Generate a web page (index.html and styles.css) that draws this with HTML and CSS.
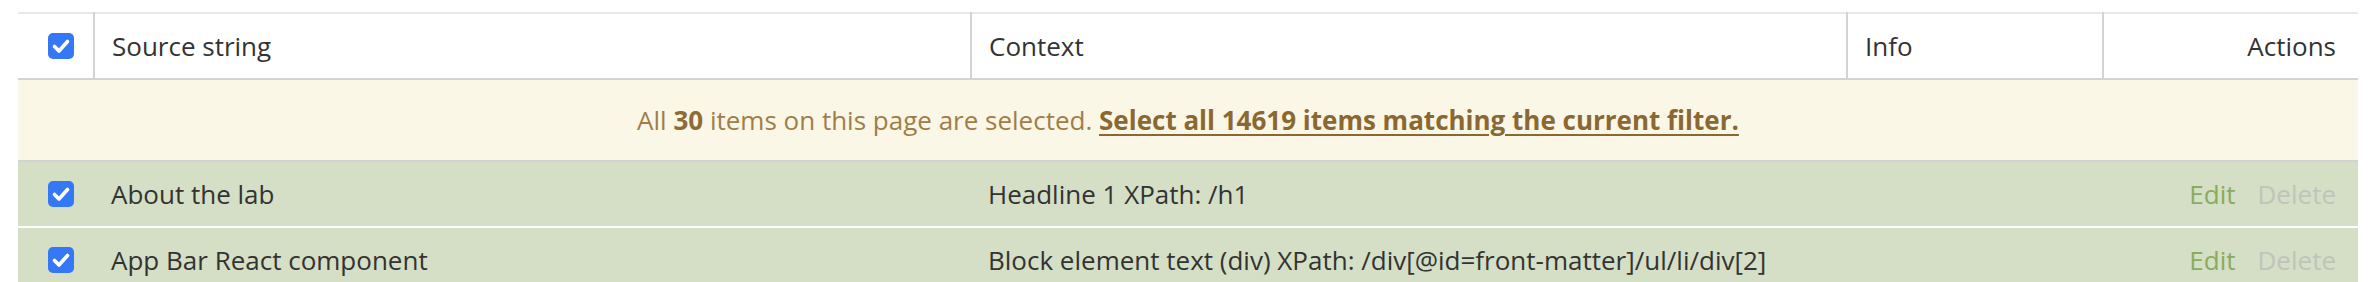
FILE: index.html
```html
<!DOCTYPE html>
<html lang="en">
<head>
<meta charset="utf-8">
<title>Source strings</title>
<link rel="stylesheet" href="styles.css">
</head>
<body>
<div class="wrap">
  <table class="grid">
    <colgroup>
      <col class="c-check">
      <col class="c-source">
      <col class="c-context">
      <col class="c-info">
      <col class="c-actions">
    </colgroup>
    <thead>
      <tr>
        <th class="cell-check"><span class="cb"><svg viewBox="0 0 26 26" width="26" height="26"><path d="M6.5 13.5 L11 18 L19.5 8.5" fill="none" stroke="#fff" stroke-width="3.6" stroke-linecap="round" stroke-linejoin="round"/></svg></span></th>
        <th class="divided">Source string</th>
        <th class="divided">Context</th>
        <th class="divided">Info</th>
        <th class="divided actions">Actions</th>
      </tr>
    </thead>
    <tbody>
      <tr class="notice">
        <td colspan="5">All <strong>30</strong> items on this page are selected. <a href="#" class="select-all">Select all 14619 items matching the current filter.</a></td>
      </tr>
      <tr class="selected first">
        <td class="cell-check"><span class="cb"><svg viewBox="0 0 26 26" width="26" height="26"><path d="M6.5 13.5 L11 18 L19.5 8.5" fill="none" stroke="#fff" stroke-width="3.6" stroke-linecap="round" stroke-linejoin="round"/></svg></span></td>
        <td>About the lab</td>
        <td>Headline 1 XPath: /h1</td>
        <td></td>
        <td class="actions"><a href="#" class="edit">Edit</a><span class="delete">Delete</span></td>
      </tr>
      <tr class="selected">
        <td class="cell-check"><span class="cb"><svg viewBox="0 0 26 26" width="26" height="26"><path d="M6.5 13.5 L11 18 L19.5 8.5" fill="none" stroke="#fff" stroke-width="3.6" stroke-linecap="round" stroke-linejoin="round"/></svg></span></td>
        <td>App Bar React component</td>
        <td>Block element text (div) XPath: /div[@id=front-matter]/ul/li/div[2]</td>
        <td></td>
        <td class="actions"><a href="#" class="edit">Edit</a><span class="delete">Delete</span></td>
      </tr>
    </tbody>
  </table>
</div>
</body>
</html>
```

FILE: styles.css
```css
html, body {
  margin: 0;
  padding: 0;
  background: #ffffff;
}

body {
  font-family: "Open Sans", "Noto Sans", sans-serif;
  font-size: 26px;
  color: #333333;
  overflow: hidden;
}

.wrap {
  padding: 12px 20px 0 18px;
}

.grid {
  width: 100%;
  border-collapse: collapse;
  table-layout: fixed;
  border-top: 2px solid #e8e8e4;
}

.c-check { width: 76px; }
.c-source { width: 877px; }
.c-context { width: 876px; }
.c-info { width: 256px; }
.c-actions { width: 255px; }

th, td {
  padding: 0 17px;
  text-align: left;
  vertical-align: middle;
  white-space: nowrap;
  line-height: 36px;
}

thead th {
  font-weight: 400;
  height: 64px;
  border-bottom: 2px solid #d3d3d1;
  background: #ffffff;
  color: #333333;
}

thead th.divided {
  border-left: 2px solid #d3d3d1;
}

.cell-check {
  padding: 0 0 0 30px;
}

.cb {
  display: block;
  width: 26px;
  height: 26px;
  border-radius: 5px;
  background: #3478f6;
}

.cb svg {
  display: block;
}

.actions {
  text-align: right;
  padding-right: 22px;
}

.notice td {
  height: 80px;
  background: #fbf7e6;
  color: #9f7e4a;
  text-align: center;
  border-bottom: 2px solid #d3d3d1;
}

.notice strong {
  font-weight: 700;
  color: #8d6c37;
}

.select-all {
  font-weight: 700;
  color: #8a6832;
  text-decoration: underline;
  text-underline-offset: 4px;
  text-decoration-thickness: 2px;
}

.selected td {
  height: 64px;
  background: #d4dfc5;
  color: #333333;
}

.selected + .selected td {
  border-top: 2px solid #ffffff;
}

.edit {
  color: #8aab5e;
  text-decoration: none;
}

.delete {
  color: #c0c4bb;
  margin-left: 22px;
}
```
